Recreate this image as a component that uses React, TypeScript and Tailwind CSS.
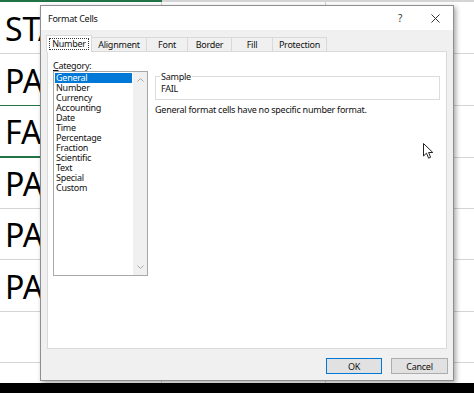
import React from "react";

const items = [
  "General",
  "Number",
  "Currency",
  "Accounting",
  "Date",
  "Time",
  "Percentage",
  "Fraction",
  "Scientific",
  "Text",
  "Special",
  "Custom",
];

function Row({ h, text }: { h: string; text: string }) {
  return (
    <div className={"flex " + h}>
      <div className="w-[162px] flex items-end pb-[8px] pl-[5px] border-b border-r border-[#d4d4d4] text-[32px] leading-[32px] text-black overflow-hidden">
        {text}
      </div>
      <div className="w-[164px] border-b border-r border-[#d4d4d4]" />
      <div className="flex-1 border-b border-[#d4d4d4]" />
    </div>
  );
}

export default function App() {
  return (
    <div className="relative w-[474px] h-[393px] overflow-hidden bg-white flex flex-col font-['Noto_Sans',sans-serif]">
      <div className="flex-1 flex flex-col overflow-hidden">
        <div className="flex h-[2px] shrink-0">
          <div className="w-[162px] bg-[#217346]" />
          <div className="flex-1 bg-[#d4d4d4]" />
        </div>
        <div className="flex h-[52px] shrink-0">
          <div className="w-[162px] flex items-end pb-[8px] pl-[5px] border-b border-r border-[#d4d4d4] text-[32px] leading-[32px] text-black overflow-hidden">
            STA
          </div>
          <div className="w-[164px] border-b border-r border-[#d4d4d4]" />
          <div className="flex-1 border-b border-[#d4d4d4]" />
        </div>
        <div className="flex h-[52px] shrink-0">
          <div className="w-[162px] flex items-end pb-[8px] pl-[5px] border-b border-r border-b-[#217346] border-r-[#d4d4d4] text-[32px] leading-[32px] text-black overflow-hidden">
            PA
          </div>
          <div className="w-[164px] border-b border-r border-[#d4d4d4]" />
          <div className="flex-1 border-b border-[#d4d4d4]" />
        </div>
        <div className="flex h-[52px] shrink-0">
          <div className="w-[162px] flex items-end pb-[8px] pl-[5px] border-b-2 border-r border-b-[#217346] border-r-[#d4d4d4] text-[32px] leading-[32px] text-black overflow-hidden">
            FA
          </div>
          <div className="w-[164px] border-b border-r border-[#d4d4d4]" />
          <div className="flex-1 border-b border-[#d4d4d4]" />
        </div>
        <Row h="h-[51px] shrink-0" text="PA" />
        <Row h="h-[51px] shrink-0" text="PA" />
        <Row h="h-[52px] shrink-0" text="PA" />
        <Row h="h-[51px] shrink-0" text="" />
        <div className="flex flex-1">
          <div className="w-[162px] border-r border-[#d4d4d4]" />
          <div className="w-[164px] border-r border-[#d4d4d4]" />
          <div className="flex-1" />
        </div>
      </div>
      <div className="h-[10px] bg-black shrink-0" />

      {/* Dialog */}
      <div className="absolute left-[40px] top-[5px] w-[414px] h-[376px] bg-[#f0f0f0] border border-[#8f8f8f] shadow-[2px_2px_5px_rgba(0,0,0,0.35)] flex flex-col text-[9px] leading-[11px] tracking-[-0.25px] text-[#111]">
        <div className="h-[24px] shrink-0 bg-white flex items-center pl-[7px]">
          <span className="text-[9px]">Format Cells</span>
          <span className="ml-auto mr-[29px] text-[10px] text-[#333]">?</span>
          <svg width="9" height="9" viewBox="0 0 9 9" className="mr-[13px]">
            <path d="M0.5 0.5 L8.5 8.5 M8.5 0.5 L0.5 8.5" stroke="#333" strokeWidth="1" />
          </svg>
        </div>

        <div className="px-[6px] pt-[5px] flex flex-col">
          {/* tabs */}
          <div className="h-[16px] flex items-end">
            <div className="w-[46px] h-[17px] -ml-[1px] -mb-[1px] relative z-10 bg-white border border-b-0 border-[#d9d9d9] flex items-center justify-center">
              <span className="border border-dotted border-[#333] px-[2px] leading-[10px]">Number</span>
            </div>
            <div className="w-[55px] h-[14px] bg-[#f0f0f0] border-t border-r border-[#d9d9d9] flex items-center justify-center">
              Alignment
            </div>
            <div className="w-[41px] h-[14px] bg-[#f0f0f0] border-t border-r border-[#d9d9d9] flex items-center justify-center">
              Font
            </div>
            <div className="w-[44px] h-[14px] bg-[#f0f0f0] border-t border-r border-[#d9d9d9] flex items-center justify-center">
              Border
            </div>
            <div className="w-[41px] h-[14px] bg-[#f0f0f0] border-t border-r border-[#d9d9d9] flex items-center justify-center">
              Fill
            </div>
            <div className="w-[54px] h-[14px] bg-[#f0f0f0] border-t border-r border-[#d9d9d9] flex items-center justify-center">
              Protection
            </div>
          </div>

          {/* panel */}
          <div className="h-[298px] bg-white border border-[#d9d9d9] flex pl-[5px] pt-[8px]">
            <div className="flex flex-col w-[95px]">
              <div className="h-[11px]">
                <span className="underline">C</span>ategory:
              </div>
              <div className="h-[205px] border border-[#a8a8a8] flex">
                <div className="flex-1 flex flex-col p-[1px]">
                  {items.map((it, i) =>
                    i === 0 ? (
                      <div key={it} className="h-[10px] leading-[10px] pl-[1px] bg-[#0078d7] text-white">
                        {it}
                      </div>
                    ) : (
                      <div key={it} className="h-[10px] leading-[10px] pl-[1px]">
                        {it}
                      </div>
                    )
                  )}
                </div>
                <div className="w-[14px] bg-[#f0f0f0] flex flex-col items-center justify-between py-[6px]">
                  <svg width="7" height="4" viewBox="0 0 7 4">
                    <path d="M0.5 3.5 L3.5 0.5 L6.5 3.5" fill="none" stroke="#a6a6a6" strokeWidth="1" />
                  </svg>
                  <svg width="7" height="4" viewBox="0 0 7 4">
                    <path d="M0.5 0.5 L3.5 3.5 L6.5 0.5" fill="none" stroke="#a6a6a6" strokeWidth="1" />
                  </svg>
                </div>
              </div>
            </div>
            <div className="ml-[7px] w-[285px] flex flex-col pt-[16px]">
              <div className="relative h-[24px] border border-[#dcdcdc] pl-[5px] pt-[6px]">
                <span className="absolute left-[4px] -top-[6px] bg-white px-[1px]">Sample</span>
                FAIL
              </div>
              <div className="mt-[4px]">General format cells have no specific number format.</div>
            </div>
          </div>

          {/* buttons */}
          <div className="mt-[9px] h-[16px] flex justify-end gap-[9px] -mr-[1px]">
            <div className="w-[56px] h-[16px] bg-[#e1e1e1] border border-[#0078d7] flex items-center justify-center">
              OK
            </div>
            <div className="w-[57px] h-[16px] bg-[#e1e1e1] border border-[#adadad] flex items-center justify-center">
              Cancel
            </div>
          </div>
        </div>
      </div>

      {/* cursor */}
      <svg className="absolute left-[423px] top-[143px]" width="12" height="17" viewBox="0 0 12 17">
        <path d="M0.5 0.5 L0.5 13 L3.5 10.2 L5.6 15.2 L7.6 14.3 L5.6 9.5 L9.8 9.5 Z" fill="white" stroke="#222" strokeWidth="1" strokeLinejoin="round" />
      </svg>
    </div>
  );
}
